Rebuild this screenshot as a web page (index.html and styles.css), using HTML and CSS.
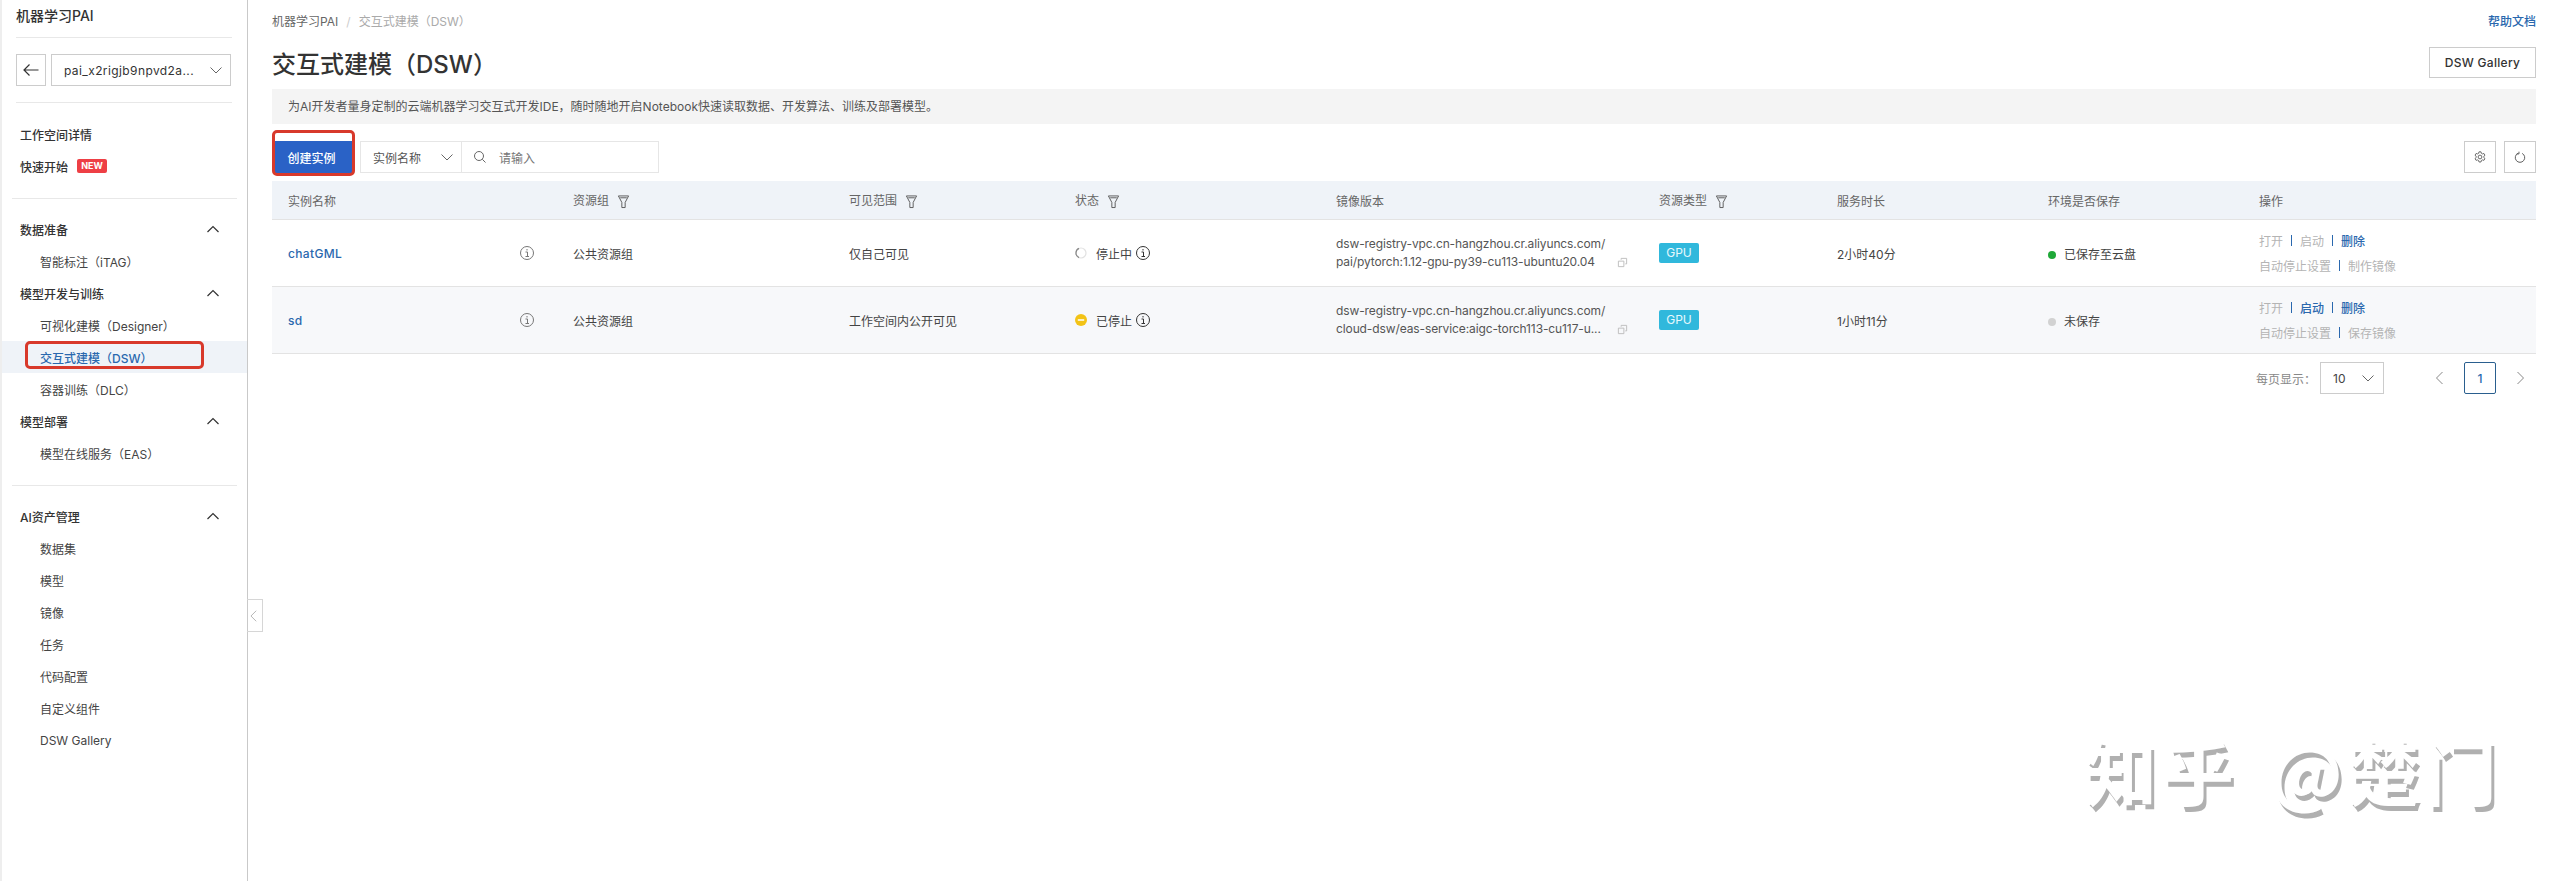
FILE: index.html
```html
<!DOCTYPE html>
<html lang="zh-CN">
<head>
  <meta charset="UTF-8">
  <title>交互式建模（DSW）</title>
  <link rel="stylesheet" href="styles.css">
</head>
<body>

  <svg class="defs" width="0" height="0">
    <symbol id="chev-down" viewBox="0 0 16 16"><path d="M2.500 5.500L8 11l5.500-5.500" fill="none" stroke="currentColor"/></symbol>
    <symbol id="chev-up" viewBox="0 0 16 16"><path d="M2.500 11L8 5.500l5.500 5.500" fill="none" stroke="currentColor" stroke-width="1.200"/></symbol>
    <symbol id="chev-left" viewBox="0 0 16 16"><path d="M10.500 2L4.500 8l6 6" fill="none" stroke="currentColor"/></symbol>
    <symbol id="chev-right" viewBox="0 0 16 16"><path d="M5.500 2l6 6-6 6" fill="none" stroke="currentColor"/></symbol>
    <symbol id="funnel" viewBox="0 0 14 16"><path d="M1.500 2h11L8.800 9v5.500H5.200V9z" fill="none" stroke="currentColor"/><path d="M3.500 4h7" stroke="currentColor"/></symbol>
    <symbol id="info" viewBox="0 0 16 16"><circle cx="8" cy="8" r="6.500" fill="none" stroke="currentColor"/><path d="M6.500 7h2v4.500M6.500 11.500h3.500M8 4v1.500" fill="none" stroke="currentColor"/></symbol>
    <symbol id="copy" viewBox="0 0 12 12"><path d="M4.500 3V1.500h6v6H9M1.500 4.500h6v6h-6z" fill="none" stroke="currentColor"/></symbol>
  </svg>

  <div class="app">
    <aside class="sidebar">
      <div class="side-title">机器学习PAI</div>
      <div class="side-switch">
        <button class="back-btn">
          <svg width="18" height="14" viewBox="0 0 18 14"><path d="M16.500 7H2M7.500 1.500L2 7l5.500 5.500" fill="none" stroke="#333" stroke-width="1.200"/></svg>
        </button>
        <div class="space-select">
          <span>pai_x2rigjb9npvd2a...</span>
          <svg class="chev"><use href="#chev-down"/></svg>
        </div>
      </div>

      <nav class="side-nav">
        <a class="nav-top">工作空间详情</a>
        <a class="nav-top">快速开始 <span class="new-badge">NEW</span></a>
      </nav>

      <nav class="side-nav group">
        <a class="nav-head">数据准备 <svg class="chev"><use href="#chev-up"/></svg></a>
        <a class="nav-item">智能标注（iTAG）</a>
        <a class="nav-head">模型开发与训练 <svg class="chev"><use href="#chev-up"/></svg></a>
        <a class="nav-item">可视化建模（Designer）</a>
        <a class="nav-item active">交互式建模（DSW）<i class="mark mark-nav"></i></a>
        <a class="nav-item">容器训练（DLC）</a>
        <a class="nav-head">模型部署 <svg class="chev"><use href="#chev-up"/></svg></a>
        <a class="nav-item">模型在线服务（EAS）</a>
      </nav>

      <nav class="side-nav group">
        <a class="nav-head">AI资产管理 <svg class="chev"><use href="#chev-up"/></svg></a>
        <a class="nav-item">数据集</a>
        <a class="nav-item">模型</a>
        <a class="nav-item">镜像</a>
        <a class="nav-item">任务</a>
        <a class="nav-item">代码配置</a>
        <a class="nav-item">自定义组件</a>
        <a class="nav-item">DSW Gallery</a>
      </nav>

      <div class="collapse-tab"><svg width="14" height="18"><use href="#chev-left"/></svg></div>
    </aside>

    <main class="main">
      <div class="crumbs">
        <span>机器学习PAI</span>
        <span class="crumb-sep">/</span>
        <span class="crumb-now">交互式建模（DSW）</span>
        <a class="help-link">帮助文档</a>
      </div>

      <div class="title-row">
        <h1>交互式建模（DSW）</h1>
        <button class="btn">DSW Gallery</button>
      </div>

      <div class="desc">为AI开发者量身定制的云端机器学习交互式开发IDE，随时随地开启Notebook快速读取数据、开发算法、训练及部署模型。</div>

      <div class="toolbar">
        <button class="btn-primary">创建实例<i class="mark mark-btn"></i></button>
        <div class="search-group">
          <div class="search-key">实例名称 <svg class="chev"><use href="#chev-down"/></svg></div>
          <div class="search-input">
            <svg width="14" height="14" viewBox="0 0 14 14"><circle cx="6" cy="6" r="4.500" fill="none" stroke="#666"/><path d="M9.300 9.300L12.500 12.500" stroke="#666"/></svg>
            <span>请输入</span>
          </div>
        </div>
        <div class="tool-right">
          <button class="icon-btn">
            <svg width="12" height="12" viewBox="0 0 14 14"><path d="M5.800 1h2.400l.4 1.700 1.300.7 1.700-.5 1.200 2-1.300 1.200v1.600l1.300 1.200-1.200 2-1.700-.5-1.300.7-.4 1.700H5.800l-.4-1.700-1.300-.7-1.700.5-1.200-2 1.300-1.200V6.100L1.200 4.900l1.200-2 1.700.5 1.300-.7z" fill="none" stroke="#555"/><circle cx="7" cy="7" r="2.200" fill="none" stroke="#555"/></svg>
          </button>
          <button class="icon-btn">
            <svg width="12" height="12" viewBox="0 0 14 14"><path d="M4.500 2.800a5.500 5.500 0 1 0 5 0" fill="none" stroke="#444"/><path d="M4.800 .8v2.600H2.200" fill="none" stroke="#444" transform="translate(1 0)"/></svg>
          </button>
        </div>
      </div>

      <table class="grid">
        <thead>
          <tr>
            <th class="c-name">实例名称</th>
            <th class="c-group">资源组 <svg class="funnel"><use href="#funnel"/></svg></th>
            <th class="c-scope">可见范围 <svg class="funnel"><use href="#funnel"/></svg></th>
            <th class="c-state">状态 <svg class="funnel"><use href="#funnel"/></svg></th>
            <th class="c-image">镜像版本</th>
            <th class="c-type">资源类型 <svg class="funnel"><use href="#funnel"/></svg></th>
            <th class="c-time">服务时长</th>
            <th class="c-save">环境是否保存</th>
            <th>操作</th>
          </tr>
        </thead>
        <tbody>
          <tr>
            <td><div class="name-cell"><a class="link">chatGML</a><svg class="info"><use href="#info"/></svg></div></td>
            <td>公共资源组</td>
            <td>仅自己可见</td>
            <td>
              <div class="state">
                <svg class="state-icon" viewBox="0 0 12 12"><circle cx="6" cy="6" r="5" fill="none" stroke="#e2e2e2" stroke-width="1.200"/><path d="M4 1.400A5 5 0 0 0 4 10.600" fill="none" stroke="#888" stroke-width="1.200"/></svg>
                <span>停止中</span>
                <svg class="info"><use href="#info"/></svg>
              </div>
            </td>
            <td>
              <div class="image-cell">
                <div>dsw-registry-vpc.cn-hangzhou.cr.aliyuncs.com/</div>
                <div class="image-line">pai/pytorch:1.12-gpu-py39-cu113-ubuntu20.04 <svg class="copy"><use href="#copy"/></svg></div>
              </div>
            </td>
            <td><span class="tag">GPU</span></td>
            <td>2小时40分</td>
            <td><span class="dot dot-green"></span>已保存至云盘</td>
            <td>
              <div class="ops">
                <div class="ops-line"><a>打开</a><i></i><a>启动</a><i></i><a class="on">删除</a></div>
                <div class="ops-line"><a>自动停止设置</a><i></i><a>制作镜像</a></div>
              </div>
            </td>
          </tr>
          <tr class="alt">
            <td><div class="name-cell"><a class="link">sd</a><svg class="info"><use href="#info"/></svg></div></td>
            <td>公共资源组</td>
            <td>工作空间内公开可见</td>
            <td>
              <div class="state">
                <svg class="state-icon" viewBox="0 0 12 12"><circle cx="6" cy="6" r="6" fill="#f3c316"/><path d="M2.800 6h6.400" stroke="#fff" stroke-width="1.500"/></svg>
                <span>已停止</span>
                <svg class="info"><use href="#info"/></svg>
              </div>
            </td>
            <td>
              <div class="image-cell">
                <div>dsw-registry-vpc.cn-hangzhou.cr.aliyuncs.com/</div>
                <div class="image-line">cloud-dsw/eas-service:aigc-torch113-cu117-u... <svg class="copy"><use href="#copy"/></svg></div>
              </div>
            </td>
            <td><span class="tag">GPU</span></td>
            <td>1小时11分</td>
            <td><span class="dot dot-gray"></span>未保存</td>
            <td>
              <div class="ops">
                <div class="ops-line"><a>打开</a><i></i><a class="on">启动</a><i></i><a class="on">删除</a></div>
                <div class="ops-line"><a>自动停止设置</a><i></i><a>保存镜像</a></div>
              </div>
            </td>
          </tr>
        </tbody>
      </table>

      <div class="pager">
        <span class="pager-label">每页显示：</span>
        <div class="page-size">10 <svg class="chev"><use href="#chev-down"/></svg></div>
        <svg class="page-arrow"><use href="#chev-left"/></svg>
        <button class="page-num">1</button>
        <svg class="page-arrow"><use href="#chev-right"/></svg>
      </div>
    </main>
  </div>

  <div class="watermark" data-text="知乎 @楚门">知乎 @楚门</div>

</body>
</html>
```

FILE: styles.css
```css
* {
  box-sizing: border-box;
}

body {
  margin: 0;
  font-family: Inter, "Noto Sans CJK SC", sans-serif;
  font-size: 12px;
  color: #333;
  background: #fff;
  overflow: hidden;
}

.defs {
  position: absolute;
}

button {
  font-family: inherit;
  cursor: pointer;
}

.app {
  display: flex;
  height: 881px;
}

/* Sidebar */
.sidebar {
  position: relative;
  flex: none;
  width: 248px;
  border-left: 2px solid #eee;
  border-right: 1px solid #c9c9c9;
}

.side-title {
  height: 38px;
  margin: 0 15px 0 14px;
  padding-top: 6px;
  border-bottom: 1px solid #e8e8e8;
  font-size: 14px;
  font-weight: 500;
  line-height: 20px;
}

.side-switch {
  display: flex;
  gap: 5px;
  height: 65px;
  margin: 0 15px 0 14px;
  padding-top: 16px;
  border-bottom: 1px solid #e8e8e8;
}

.back-btn {
  flex: none;
  display: flex;
  align-items: center;
  justify-content: center;
  width: 30px;
  height: 32px;
  padding: 0;
  background: #fff;
  border: 1px solid #ccc;
}

.space-select {
  display: flex;
  align-items: center;
  justify-content: space-between;
  width: 180px;
  height: 32px;
  padding: 0 6px 0 12px;
  border: 1px solid #ccc;
  letter-spacing: 0.4px;
  color: #333;
}

.chev {
  flex: none;
  width: 16px;
  height: 16px;
  color: #666;
}

.side-nav {
  padding: 15px 0 16px;
}

.side-nav.group {
  margin: 0 10px;
  padding: 14px 0 16px;
  border-top: 1px solid #e8e8e8;
}

.side-nav a {
  display: flex;
  align-items: center;
  height: 32px;
}

.nav-top {
  padding-left: 18px;
  font-weight: 500;
}

.new-badge {
  display: inline-block;
  margin-left: 9px;
  width: 30px;
  height: 14px;
  background: #ee3f45;
  border-radius: 2px;
  color: #fff;
  font-size: 9px;
  font-weight: 700;
  line-height: 14px;
  text-align: center;
}

.nav-head {
  justify-content: space-between;
  padding: 0 16px 0 8px;
  font-weight: 500;
}

.nav-head .chev {
  color: #333;
}

.nav-item {
  position: relative;
  padding-left: 28px;
  color: #444;
}

.nav-item.active {
  margin: 0 -10px;
  padding-left: 38px;
  background: #eff3f8;
  color: #2a68ae;
  font-weight: 500;
}

/* red annotation boxes drawn on the screenshot */
.mark {
  position: absolute;
  border: 3px solid #d8392b;
  border-radius: 5px;
  pointer-events: none;
}

.mark-nav {
  left: 23px;
  top: 0;
  width: 179px;
  height: 28px;
}

.mark-btn {
  left: -3px;
  top: -11px;
  width: 83px;
  height: 46px;
}

.collapse-tab {
  position: absolute;
  left: 100%;
  top: 599px;
  display: flex;
  align-items: center;
  width: 16px;
  height: 33px;
  border: 1px solid #d6d6d6;
  border-left: none;
  color: #aaa;
}

/* Main */
.main {
  flex: 1;
  min-width: 0;
  padding: 13px 18px 0 24px;
}

.crumbs {
  display: flex;
  gap: 8px;
  height: 18px;
  line-height: 18px;
  color: #666;
}

.crumb-sep {
  color: #ccc;
}

.crumb-now {
  color: #aaa;
}

.help-link {
  margin-left: auto;
  color: #2a68ae;
  font-weight: 500;
}

.title-row {
  display: flex;
  align-items: center;
  justify-content: space-between;
  height: 31px;
  margin-top: 16px;
}

h1 {
  margin: 0;
  font-size: 24px;
  font-weight: 500;
  color: #333;
}

.btn {
  width: 107px;
  height: 31px;
  padding: 0;
  background: #fff;
  border: 1px solid #ccc;
  font-size: 12px;
  font-weight: 500;
  letter-spacing: 0.3px;
  color: #333;
}

.desc {
  height: 35px;
  margin-top: 11px;
  padding-left: 16px;
  background: #f4f4f4;
  color: #555;
  line-height: 35px;
}

.toolbar {
  display: flex;
  height: 32px;
  margin-top: 17px;
  padding-left: 3px;
}

.btn-primary {
  position: relative;
  flex: none;
  width: 77px;
  height: 32px;
  padding: 0 4px 0 0;
  background: #2a62c6;
  border: none;
  color: #fff;
  font-size: 12px;
  font-weight: 500;
}

.search-group {
  display: flex;
  width: 299px;
  margin-left: 8px;
  border: 1px solid #e6e6e6;
}

.search-key {
  display: flex;
  align-items: center;
  justify-content: space-between;
  width: 101px;
  padding: 0 6px 0 12px;
  border-right: 1px solid #e6e6e6;
  color: #555;
}

.search-input {
  display: flex;
  align-items: center;
  gap: 12px;
  padding-left: 11px;
  color: #777;
}

.tool-right {
  display: flex;
  gap: 8px;
  margin-left: auto;
}

.icon-btn {
  display: flex;
  align-items: center;
  justify-content: center;
  width: 32px;
  height: 32px;
  padding: 0;
  background: #fff;
  border: 1px solid #ccc;
}

/* Table */
.grid {
  width: 100%;
  margin-top: 8px;
  border-collapse: separate;
  border-spacing: 0;
  table-layout: fixed;
}

.grid th,
.grid td {
  padding: 0 0 0 16px;
  text-align: left;
  border-bottom: 1px solid #e3e3e3;
  white-space: nowrap;
}

.grid th {
  height: 39px;
  background: #eff3f8;
  font-weight: 400;
  color: #666;
}

.grid td {
  height: 67px;
  color: #444;
}

.grid tr.alt td {
  background: #f7f8fa;
}

.c-name { width: 285px; }
.c-group { width: 276px; }
.c-scope { width: 226px; }
.c-state { width: 261px; }
.c-image { width: 323px; }
.c-type { width: 178px; }
.c-time { width: 211px; }
.c-save { width: 211px; }

.funnel {
  width: 13px;
  height: 15px;
  margin-left: 5px;
  vertical-align: -4px;
  color: #555;
}

.name-cell {
  display: flex;
  align-items: center;
  justify-content: space-between;
  padding-right: 22px;
}

.link {
  color: #2a68ae;
  font-size: 12px;
  font-weight: 500;
  letter-spacing: 0.35px;
}

.info {
  width: 16px;
  height: 16px;
  color: #777;
}

.state {
  display: flex;
  align-items: center;
}

.state-icon {
  width: 12px;
  height: 12px;
  margin-right: 9px;
}

.state .info {
  margin-left: 3px;
  color: #333;
}

.image-cell {
  width: 292px;
  line-height: 18px;
  letter-spacing: -0.11px;
  color: #555;
}

.image-line {
  display: flex;
  align-items: center;
  justify-content: space-between;
}

.copy {
  width: 11px;
  height: 11px;
  color: #bbb;
}

.tag {
  display: inline-block;
  width: 40px;
  height: 20px;
  background: #30b8dc;
  border-radius: 2px;
  color: #e8f8fc;
  line-height: 20px;
  text-align: center;
}

.dot {
  display: inline-block;
  width: 8px;
  height: 8px;
  margin-right: 8px;
  border-radius: 50%;
}

.dot-green {
  background: #1fa838;
}

.dot-gray {
  background: #d2d2d2;
}

.ops-line {
  display: flex;
  align-items: center;
  gap: 8px;
  height: 25px;
  color: #b4b4b4;
}

.ops-line i {
  width: 1px;
  height: 11px;
  background: #2a68ae;
}

.ops-line .on {
  color: #2a68ae;
  font-weight: 500;
}

/* Pagination */
.pager {
  display: flex;
  align-items: center;
  justify-content: flex-end;
  height: 32px;
  margin-top: 8px;
  padding-right: 8px;
}

.pager-label {
  color: #888;
  margin-right: 4px;
}

.page-size {
  display: flex;
  align-items: center;
  justify-content: space-between;
  width: 64px;
  height: 32px;
  margin-right: 48px;
  padding: 0 7px 0 12px;
  border: 1px solid #ccc;
  color: #444;
}

.page-arrow {
  width: 16px;
  height: 16px;
  color: #888;
}

.page-num {
  width: 32px;
  height: 32px;
  margin: 0 16px;
  padding: 0;
  background: #fff;
  border: 1px solid #2a5f8f;
  border-radius: 2px;
  color: #2a68ae;
  font-size: 12px;
  font-weight: 500;
}

/* Site watermark stamped over the image */
.watermark {
  position: absolute;
  left: 2088px;
  top: 724px;
  font-family: "Noto Sans CJK SC", sans-serif;
  font-size: 72px;
  font-weight: 700;
  line-height: 100px;
  letter-spacing: 5px;
  word-spacing: 10px;
  color: #b0b0b0;
  white-space: nowrap;
}

.watermark::after {
  content: attr(data-text);
  position: absolute;
  left: -3px;
  top: -5px;
  color: #fff;
}
```
